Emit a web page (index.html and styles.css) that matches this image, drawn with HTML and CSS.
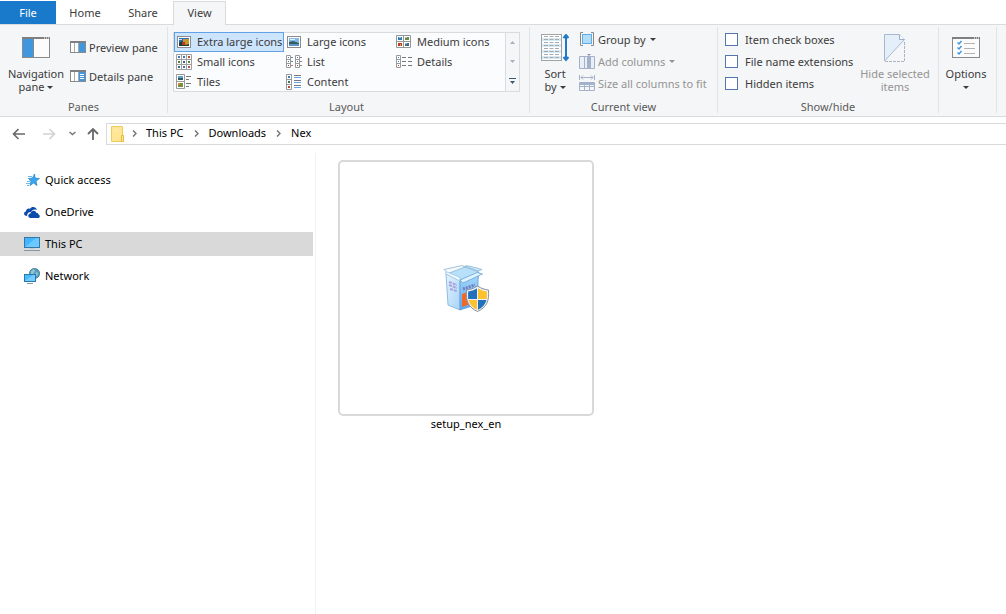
FILE: index.html
```
<!DOCTYPE html>
<html lang="en">
<head>
<meta charset="utf-8">
<title>Nex</title>
<link rel="stylesheet" href="styles.css">
</head>
<body>
<div class="window">
  <nav class="tabs" aria-label="Ribbon tabs">
    <button class="tab tab-file">File</button>
    <button class="tab">Home</button>
    <button class="tab">Share</button>
    <button class="tab tab-active">View</button>
  </nav>

  <header class="ribbon">
    <section class="group panes">
      <div class="group-body">
        <button class="big nav-pane">
          <svg width="28" height="22" viewBox="0 0 28 22"><rect x="0.500" y="0.500" width="27" height="20" fill="#fcfcfc" stroke="#8a8a8a"/><path d="M0 0h28v2H0z" fill="#808080"/><path d="M22 1h1M24 1h1M26 1h1" stroke="#fff"/><path d="M1 2h10v18H1z" fill="#3f97df"/><path d="M11.500 2v18" stroke="#888"/></svg>
          <span class="big-text">Navigation<br>pane <i class="caret"></i></span>
        </button>
        <div class="pane-list">
          <button class="small"><svg width="16" height="12" viewBox="0 0 16 12"><rect x=".5" y=".5" width="15" height="11" fill="#fff" stroke="#8a8a8a"/><path d="M0 0h16v2H0z" fill="#808080"/><path d="M4.500 2v9M8.500 2v9" stroke="#aaa"/><path d="M9 2h6v9H9z" fill="#3f97df"/></svg>Preview pane</button>
          <button class="small"><svg width="16" height="12" viewBox="0 0 16 12"><rect x=".5" y=".5" width="15" height="11" fill="#fff" stroke="#8a8a8a"/><path d="M0 0h16v2H0z" fill="#808080"/><path d="M4.500 2v9M8.500 2v9" stroke="#aaa"/><path d="M9 2h6v9H9z" fill="#3f97df"/><path d="M10 4.500h4M10 6.500h4M10 8.500h4" stroke="#fff"/></svg>Details pane</button>
        </div>
      </div>
      <h2 class="group-title">Panes</h2>
    </section>

    <section class="group layout">
      <div class="group-body">
        <div class="gallery">
          <div class="gallery-items">
            <button class="view view-selected"><svg width="16" height="16" viewBox="0 0 16 16"><rect x="1.500" y="2.500" width="13" height="11" fill="#fff" stroke="#8b8b8b"/><path d="M3 4h10v8H3z" fill="#2b6db9"/><path d="M3 9l3-2 3 2 4-1v4H3z" fill="#1e3e35"/><path d="M7 5h6v5l-3 1-3-2z" fill="#c4962e"/><path d="M6 8h3v3H6z" fill="#bd3524"/><path d="M3 5h3v1H3z" fill="#c0e0fa"/></svg>Extra large icons</button>
            <button class="view"><svg width="16" height="16" viewBox="0 0 16 16"><rect x="1.500" y="2.500" width="13" height="11" fill="#fff" stroke="#8b8b8b"/><path d="M3 4h10v8H3z" fill="#84b7e6"/><path d="M3 8l4-1 6 2v3H3z" fill="#315e62"/><path d="M3 10h10v2H3z" fill="#5b94c4"/><path d="M4 5h5v1H4z" fill="#e3f3ff"/></svg>Large icons</button>
            <button class="view"><svg width="16" height="16" viewBox="1 1 16 16"><path d="M1.500 2.500h14v12h-14zM8.500 2.500v12M1.500 8.500h14" fill="#fff" stroke="#969696"/><path d="M3 4h4v3H3z" fill="#347cb8"/><path d="M10 4h4v3h-4z" fill="#6d8a41"/><path d="M3 10h4v3H3z" fill="#ba3824"/><path d="M10 10h4v3h-4z" fill="#476c80"/><path d="M4 4h2v1H4zM10 4h2v1h-2zM10 10h2v1h-2z" fill="#8fc9f1"/><path d="M5 11h1v2H5z" fill="#e2a13c"/></svg>Medium icons</button>
            <button class="view"><svg width="16" height="16" viewBox="0 0 16 16"><path d="M.5.500h15v15H.5zM5.500.500v15M10.500.500v15M.5 5.500h15M.5 10.500h15" fill="#fff" stroke="#a0a0a0"/><path d="M2 2h2v2H2zM7 2h2v2H7zM7 12h2v2H7z" fill="#3f77ae"/><path d="M12 2h2v2h-2zM12 12h2v2h-2z" fill="#b64c3e"/><path d="M2 7h2v2H2zM12 7h2v2h-2z" fill="#57873c"/><path d="M7 7h2v2H7zM2 12h2v2H2z" fill="#356286"/></svg>Small icons</button>
            <button class="view"><svg width="16" height="16" viewBox="0 0 16 16"><path d="M.5 1.500h4v12h-4zM.5 5.500h4M.5 9.500h4M9.500 1.500h4v12h-4zM9.500 5.500h4M9.500 9.500h4" fill="#fff" stroke="#999"/><path d="M2 3h1v1H2zM11 3h1v1h-1z" fill="#397ebd"/><path d="M2 7h1v1H2zM11 7h1v1h-1z" fill="#348060"/><path d="M2 11h1v1H2zM11 11h1v1h-1z" fill="#b9442d"/><path d="M5 3.500h2M5 7.500h2M5 11.500h2M14 3.500h2M14 7.500h2M14 11.500h2" stroke="#888"/></svg>List</button>
            <button class="view"><svg width="16" height="16" viewBox="0 0 16 16"><path d="M.5 1.500h4v12h-4zM.5 5.500h4M.5 9.500h4" fill="#fff" stroke="#999"/><path d="M2 3h1v1H2z" fill="#397ebd"/><path d="M2 7h1v1H2z" fill="#3590b8"/><path d="M2 11h1v1H2z" fill="#c9401d"/><path d="M6 3.500h4M12 3.500h4M6 7.500h4M12 7.500h4M6 11.500h4M12 11.500h4" stroke="#777"/></svg>Details</button>
            <button class="view"><svg width="16" height="16" viewBox="0 0 16 16"><path d="M.5.500h8v14h-8zM.5 7.500h8" fill="#fff" stroke="#999"/><path d="M2 2h5v4H2z" fill="#65a2d4"/><path d="M2 4h5v2H2z" fill="#31595f"/><path d="M2 9h5v4H2z" fill="#75913d"/><path d="M2 9h2v2H2z" fill="#d88129"/><path d="M10 2.500h5M10 5.500h3M10 9.500h5M10 12.500h3" stroke="#777"/></svg>Tiles</button>
            <button class="view"><svg width="16" height="16" viewBox="0 0 16 16"><path d="M.5.500h5v15h-5zM.5 5.500h5M.5 10.500h5" fill="#fff" stroke="#999"/><path d="M2 2h2v2H2z" fill="#397ebd"/><path d="M2 7h2v2H2z" fill="#3a7758"/><path d="M2 12h2v2H2z" fill="#b9442d"/><path d="M8 1.500h7M8 6.500h7M8 11.500h7" stroke="#777"/><path d="M8 3.500h7M8 8.500h7M8 13.500h7" stroke="#64a5e7"/></svg>Content</button>
          </div>
          <div class="gallery-scroll">
            <button aria-label="Scroll up"><svg width="7" height="5" viewBox="0 0 7 5"><path d="M1 4l2.500-3L6 4z" fill="#a8b0bf"/></svg></button>
            <button aria-label="Scroll down"><svg width="7" height="5" viewBox="0 0 7 5"><path d="M1 1l2.500 3L6 1z" fill="#a8b0bf"/></svg></button>
            <button aria-label="More layouts"><svg width="7" height="7" viewBox="0 0 7 7"><path d="M0 .5h7" stroke="#3c586f"/><path d="M1 3h5L3.500 6z" fill="#3c586f"/></svg></button>
          </div>
        </div>
      </div>
      <h2 class="group-title">Layout</h2>
    </section>

    <section class="group current">
      <div class="group-body">
        <button class="big sort">
          <svg width="28" height="28" viewBox="0 0 28 28"><rect x=".5" y=".5" width="20" height="26" fill="#fff" stroke="#a3a3a3"/><path d="M1 4h19v3H1zM1 10h19v3H1zM1 16h19v3H1zM1 22h19v3H1z" fill="#d5e8f6"/><path d="M3 2.500h15M3 5.500h15M3 8.500h15M3 11.500h15M3 14.500h15M3 17.500h15M3 20.500h15M3 23.500h15" stroke="#aaa" stroke-dasharray="4 1.500"/><path d="M25 3v21M22.500 4L25 1l2.500 3M22.500 23l2.500 3 2.500-3" fill="none" stroke="#2079c8" stroke-width="2"/></svg>
          <span class="big-text">Sort<br>by <i class="caret"></i></span>
        </button>
        <div class="row-list">
          <button class="small"><svg width="16" height="16" viewBox="0 0 16 16"><path d="M4 1.500H1.500v13H4M12 1.500h2.500v13H12" fill="none" stroke="#888"/><rect x="3.500" y="3.500" width="9" height="9" fill="#b1ddf8" stroke="#60ace5"/></svg>Group by <i class="caret"></i></button>
          <button class="small" disabled><svg width="16" height="16" viewBox="0 0 16 16"><path d="M.5 3.500h15v12H.5zM5.500 3.500v12M10.500 3.500v12" fill="#e9eff7" stroke="#a3b2ca"/><path d="M8 4h4v12H8z" fill="#a3b2ca"/><path d="M8 1h4l-2 2z" fill="#8394b2"/></svg>Add columns <i class="caret"></i></button>
          <button class="small" disabled><svg width="16" height="16" viewBox="0 0 16 16"><path d="M.5 0v5M15.500 0v5M2 2.500h12M4 .5l-2 2 2 2M12 .5l2 2-2 2M.5 7.500h15v8H.5zM.5 11.500h15M5.500 10v6M10.500 10v6" fill="none" stroke="#a3b2ca"/><path d="M1 8h14v2H1z" fill="#a3b2ca"/></svg>Size all columns to fit</button>
        </div>
      </div>
      <h2 class="group-title">Current view</h2>
    </section>

    <section class="group showhide">
      <div class="group-body">
        <div class="row-list">
          <label class="check"><input type="checkbox">Item check boxes</label>
          <label class="check"><input type="checkbox">File name extensions</label>
          <label class="check"><input type="checkbox">Hidden items</label>
        </div>
        <button class="big hide" disabled>
          <svg width="22" height="28" viewBox="0 0 22 28"><path d="M.5.500h15l5 5L.5 27z" fill="#e4effa" stroke="#aab9d2"/><path d="M15.500.500v5h5" fill="#f8fbff" stroke="#9aadca"/><path d="M20.500 8v19.500H1" fill="none" stroke="#aab5c8" stroke-dasharray="3 1"/></svg>
          <span class="big-text">Hide selected<br>items</span>
        </button>
      </div>
      <h2 class="group-title">Show/hide</h2>
    </section>

    <section class="group options">
      <div class="group-body">
        <button class="big opt">
          <svg width="28" height="22" viewBox="0 0 28 22"><rect x=".5" y=".5" width="27" height="20" fill="#fcfcfc" stroke="#8a8a8a"/><path d="M0 0h28v2H0z" fill="#808080"/><path d="M22 1h1M24 1h1M26 1h1" stroke="#fff"/><path d="M12 6.500h11M12 11.500h11M12 16.500h11" stroke="#b3b3b3"/><path d="M5.500 5.500l1.500 1.500 2.500-3M5.500 10.500l1.500 1.500 2.500-3M5.500 15.500l1.500 1.500 2.500-3" fill="none" stroke="#3f97df" stroke-width="1.500"/></svg>
          <span class="big-text">Options<br><i class="caret"></i></span>
        </button>
      </div>
    </section>
  </header>

  <div class="navbar">
    <button class="nav back" aria-label="Back"><svg width="14" height="12" viewBox="0 0 14 12"><path d="M13 6H2M6.500 1L1.500 6l5 5" fill="none" stroke="#686868" stroke-width="1.600"/></svg></button>
    <button class="nav forward" aria-label="Forward" disabled><svg width="14" height="12" viewBox="0 0 14 12"><path d="M1 6h11M7.500 1l5 5-5 5" fill="none" stroke="#d2d2d2" stroke-width="1.600"/></svg></button>
    <button class="nav recent" aria-label="Recent locations"><svg width="7" height="5" viewBox="0 0 7 5"><path d="M.5 1l3 2.500 3-2.500" fill="none" stroke="#777" stroke-width="1.500"/></svg></button>
    <button class="nav up" aria-label="Up"><svg width="12" height="13" viewBox="0 0 12 13"><path d="M6 13V2M1 7l5-5 5 5" fill="none" stroke="#686868" stroke-width="1.800"/></svg></button>
    <div class="address">
      <svg class="folder" width="13" height="16" viewBox="0 0 13 16"><path d="M.5.500h11v9h1v6H.5z" fill="#ffe694" stroke="#edcc5a"/><path d="M10.500 9.500h2v6h-2z" fill="#ffe694" stroke="#e5bb38"/><path d="M3 3h1v1H3zM6 3h1v1H6zM4 5h1v1H4z" fill="#fff8dc"/></svg>
      <svg class="sep" width="5" height="7" viewBox="0 0 5 7"><path d="M1 .5l3 3-3 3" fill="none" stroke="#777" stroke-width="1.500"/></svg>
      <a href="#">This PC</a>
      <svg class="sep" width="5" height="7" viewBox="0 0 5 7"><path d="M1 .5l3 3-3 3" fill="none" stroke="#777" stroke-width="1.500"/></svg>
      <a href="#">Downloads</a>
      <svg class="sep" width="5" height="7" viewBox="0 0 5 7"><path d="M1 .5l3 3-3 3" fill="none" stroke="#777" stroke-width="1.500"/></svg>
      <a href="#">Nex</a>
    </div>
  </div>

  <div class="content">
    <nav class="tree" aria-label="Navigation pane">
      <a href="#"><svg width="16" height="16" viewBox="0 0 16 16"><path d="M10.500 2l.5 4 4.500.5-3.500 2.500 1 4.500-3.500-2.500-3.500 2.500 1-4L4.500 6.500 8.500 6z" fill="#3aa5f0" stroke="#237fc4" stroke-width=".7"/><path d="M4 4.500h4M3 9.500h3M2 11.500h4M3 13.500h2" stroke="#69b9ef"/></svg>Quick access</a>
      <a href="#"><svg width="16" height="16" viewBox="0 0 16 16"><path d="M3 12c-3.500 0-4-4-1-4.500C2 5 4.500 4 6 5c1.500-3 6-2.500 7 1-3-1-5 0-6 2-3 0-4 2-4 4z" fill="#0b4bac"/><path d="M6.500 14c-3 0-3-4.500 0-4.500C7 6 11.500 6 12.500 9c1-.3 2 .3 2 1.500 2 .5 1.500 3.500-.5 3.500z" fill="#0b4bac"/></svg>OneDrive</a>
      <a href="#" class="selected"><svg width="16" height="16" viewBox="0 0 16 16"><rect x=".5" y="1.500" width="15" height="10" fill="#41b5ff" stroke="#3577a2"/><path d="M1 11L12 2h3v9z" fill="#6bc9ff"/><path d="M6 12h4v1H6z" fill="#b9cbd7"/><path d="M0 14.500h16" stroke="#8098aa"/></svg>This PC</a>
      <a href="#"><svg width="16" height="16" viewBox="0 0 16 16"><circle cx="10.500" cy="5.500" r="5" fill="#5c9fbd" stroke="#417e9f"/><path d="M7 3l3-2 1 2-2 3-2 1zM12 4l2 1-1 3-2-1z" fill="#8fc7cf"/><rect x=".5" y="6.500" width="11" height="7" fill="#4abaff" stroke="#2877ad"/><path d="M1 13l8-6h2v6z" fill="#76cdff"/><path d="M3 15.500h6" stroke="#8098aa"/></svg>Network</a>
    </nav>
    <main class="files">
      <figure class="file">
        <div class="thumb">
          <svg width="48" height="48" viewBox="0 0 48 48">
            <defs>
              <linearGradient id="side" x2="1" y2="1"><stop stop-color="#e3f3ff"/><stop offset="1" stop-color="#a9d3f8"/></linearGradient>
              <linearGradient id="front" x2="0" y2="1"><stop stop-color="#a5d8fb"/><stop offset="1" stop-color="#5fa6ec"/></linearGradient>
            </defs>
            <path d="M4 8L20 2l17 6-1 7-18 3z" fill="#b9e0fa" stroke="#7fb3da" stroke-width=".8"/>
            <path d="M4 10l14 6v30L6 41z" fill="url(#side)" stroke="#7aaed8" stroke-width=".8"/>
            <path d="M18 16l18-5v29l-18 6z" fill="url(#front)" stroke="#5c9fd9" stroke-width=".8"/>
            <path d="M2 5.500L20 1.500l3 1.500L6 9.500z" fill="#f3faff" stroke="#8fb4d0" stroke-width=".8"/>
            <path d="M23 2l13 5 4-1.500L27 2z" fill="#d2edff" stroke="#87b2d2" stroke-width=".8"/>
            <path d="M4 10l-1-1 2-1 13 5.500V17z" fill="#f3faff" stroke="#8cb9da" stroke-width=".6"/>
            <path d="M18 16L35 8.500l5.500 1.500L21 19z" fill="#dff2ff" stroke="#6aa4d4" stroke-width=".8"/>
            <path d="M20 30l14-5v13l-14 5z" fill="#f1682a"/>
            <path d="M24 32l7-4 3 5-8 6z" fill="#ff9f53"/>
            <path d="M7 18l8 3M7 21l8 3M8 25l7 2" stroke="#a7a3de" stroke-width="2" stroke-dasharray="3 1"/>
            <path d="M21 25l12-4" stroke="#6f7fc0" stroke-width="3" stroke-dasharray="2 1"/>
            <path d="M35.500 22c4 2.500 7 3.500 11 4 1 11-2 17.500-11 21.500-9-4-12-10.500-11-21.500 4-.5 7-1.500 11-4z" fill="#eef1f3" stroke="#87939b"/>
            <path d="M35 24.500V35h-8.800c-.2-2.500-.2-5 0-7.500 3-.4 6-1.400 8.800-3zM36 36h8.500c-1.200 4.500-4 7.500-8.500 9.700z" fill="#2370bd"/>
            <path d="M36 24.500c2.800 1.600 5.800 2.600 8.800 3 .2 2.500.2 5 0 7.500H36zM26.500 36H35v9.700c-4.500-2.200-7.300-5.200-8.500-9.700z" fill="#fec22e"/>
          </svg>
        </div>
        <figcaption>setup_nex_en</figcaption>
      </figure>
    </main>
  </div>
</div>
</body>
</html>
```
FILE: styles.css
```
* { box-sizing: border-box; }
body {
  margin: 0;
  background: #fff;
  color: #000;
  font: 11px/16px "Noto Sans", "Open Sans", sans-serif;
}
button {
  margin: 0;
  padding: 0;
  border: 0;
  background: none;
  color: inherit;
  font: inherit;
  white-space: nowrap;
}
a { color: inherit; text-decoration: none; }
svg { display: block; flex: none; }
.window { display: flex; flex-direction: column; min-height: 100vh; }

.tabs {
  display: flex;
  height: 25px;
  padding-top: 1px;
  border-bottom: 1px solid #dadbdc;
  color: #3b3b3b;
}
.tab { width: 58px; height: 23px; }
.tab-file { width: 56px; background: #1979ca; color: #fff; }
.tab-active {
  width: 53px;
  height: 24px;
  margin-left: 1px;
  padding-bottom: 1px;
  border: 1px solid #dadbdc;
  border-bottom: 0;
  background: #f5f6f7;
  box-shadow: 0 1px #f5f6f7;
}

.ribbon {
  display: flex;
  height: 92px;
  padding: 2px 0 3px;
  border-bottom: 1px solid #dadbdc;
  background: #f5f6f7;
  color: #3b3b3b;
  line-height: 13px;
}
.group {
  display: flex;
  flex-direction: column;
  flex: none;
  border-right: 1px solid #e2e3e4;
}
.group-body { display: flex; flex: 1; }
.group-title {
  margin: 0;
  height: 12px;
  color: #5a5a5a;
  font-size: 11px;
  font-weight: 400;
  line-height: 12px;
  text-align: center;
}
.panes { width: 168px; }
.layout { width: 362px; padding: 0 9px 0 5px; }
.current { width: 188px; }
.showhide { width: 221px; }
.options { width: 58px; padding-right: 3px; }

.big { display: flex; flex-direction: column; align-items: center; gap: 5px; padding-top: 7px; }
.big svg { height: 28px; }
.big-text { display: block; text-align: center; }
.nav-pane { width: 56px; margin-left: 8px; }
.sort { width: 28px; margin-left: 11px; }
.hide { width: 72px; margin-left: 5px; }
.opt { width: 100%; }
.caret {
  display: inline-block;
  border: 3px solid transparent;
  border-top-color: currentColor;
  border-bottom: 0;
  vertical-align: 2px;
}
.small { display: flex; align-items: center; gap: 3px; height: 22px; }
.small .caret { margin-left: 1px; }
.pane-list { display: flex; flex-direction: column; gap: 7px; margin: 9px 0 0 6px; }
.row-list { display: flex; flex-direction: column; margin: 1px 0 0 10px; }
.showhide .row-list { width: 129px; margin-left: 7px; }
button:disabled { color: #949494; }
.check { display: flex; align-items: center; gap: 7px; height: 22px; white-space: nowrap; }
.check input {
  appearance: none;
  width: 13px;
  height: 13px;
  margin: 0;
  border: 1px solid #5575ac;
  background: #fff;
}

.gallery {
  display: flex;
  width: 100%;
  height: 60px;
  margin-top: 5px;
  border: 1px solid #dadbdc;
  background: #fbfcfe;
}
.gallery-items {
  display: grid;
  flex: 1;
  grid-template-columns: 110px 110px 1fr;
  grid-auto-rows: 20px;
  margin-top: -1px;
}
.view { display: flex; align-items: center; gap: 5px; padding: 0 0 2px 2px; }
.view svg { margin-top: 2px; }
.view-selected { background: #cce4fc; outline: 1px solid #62a2e4; outline-offset: -1px; }
.gallery-scroll {
  display: flex;
  flex-direction: column;
  width: 14px;
  border-left: 1px solid #dadbdc;
  background: #f5f6f7;
}
.gallery-scroll button { display: grid; flex: 1; place-items: center; }

.navbar { display: flex; align-items: center; height: 33px; }
.nav { display: grid; width: 30px; height: 22px; place-items: center; }
.back { width: 34px; margin-left: 2px; }
.forward { width: 26px; }
.recent { width: 20px; }
.up { width: 22px; margin-right: 2px; }
.address {
  display: flex;
  flex: 1;
  align-items: center;
  height: 22px;
  padding-left: 4px;
  border: 1px solid #d9d9d9;
  border-right: 0;
}
.address a { padding-bottom: 1px; }
.sep { margin: 0 10px; }
.folder + .sep { margin: 0 9px 0 8px; }

.content { display: flex; flex: 1; padding-top: 3px; }
.tree {
  display: flex;
  flex: none;
  flex-direction: column;
  gap: 8px;
  width: 316px;
  padding: 15px 2px 0 0;
  border-right: 1px solid #f2f2f2;
}
.tree a { display: flex; align-items: center; gap: 5px; height: 24px; padding-left: 24px; }
.tree .selected { background: #d9d9d9; }
.files { flex: 1; padding: 7px 22px; }
.file { width: 256px; margin: 0; text-align: center; }
.thumb {
  display: grid;
  height: 256px;
  place-items: center;
  border: 2px solid #d9d9d9;
  border-radius: 5px;
}
```
